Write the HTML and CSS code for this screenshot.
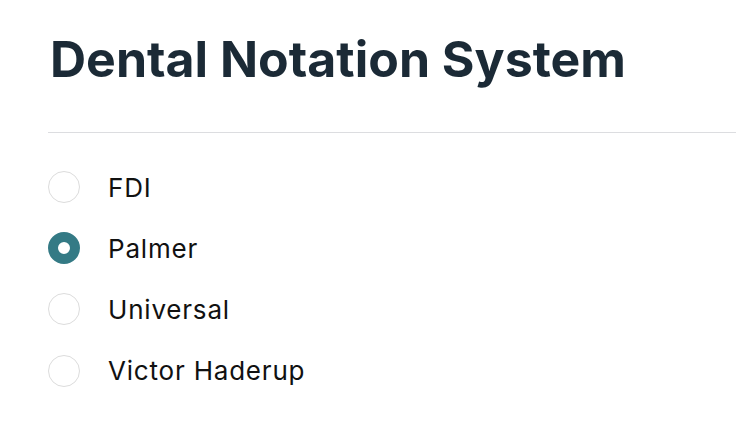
FILE: index.html
```html
<!DOCTYPE html>
<html>
<head>
<meta charset="utf-8">
<link rel="stylesheet" href="styles.css">
</head>
<body>
<div class="panel">
  <h1 class="title">Dental Notation System</h1>
  <hr class="divider">
  <div class="options">
    <label class="option"><span class="radio"></span><span class="label">FDI</span></label>
    <label class="option"><span class="radio checked"></span><span class="label">Palmer</span></label>
    <label class="option"><span class="radio"></span><span class="label">Universal</span></label>
    <label class="option"><span class="radio"></span><span class="label">Victor Haderup</span></label>
  </div>
</div>
</body>
</html>
```
FILE: styles.css
```css
html, body {
  margin: 0;
  padding: 0;
  background: #ffffff;
}
body {
  font-family: Inter, "Noto Sans", "Liberation Sans", sans-serif;
  width: 736px;
  height: 432px;
  overflow: hidden;
}
.panel {
  padding: 25px 0 0 48px;
}
.title {
  margin: 0;
  font-size: 50px;
  line-height: 68px;
  font-weight: 700;
  color: #1b2a36;
  padding-left: 2px;
}
.divider {
  border: 0;
  border-top: 1px solid #dcdde0;
  margin: 39px 0 0 0;
}
.options {
  display: flex;
  flex-direction: column;
  gap: 29.2px;
  padding-top: 38px;
}
.option {
  display: flex;
  align-items: center;
  gap: 28px;
  height: 32px;
}
.radio {
  box-sizing: border-box;
  width: 32px;
  height: 32px;
  border-radius: 50%;
  border: 1px solid #dcdcdc;
  background: #fff;
  flex: none;
}
.radio.checked {
  border: 10px solid #347a85;
}
.label {
  font-size: 26px;
  letter-spacing: 0.8px;
  color: #111111;
}
```
